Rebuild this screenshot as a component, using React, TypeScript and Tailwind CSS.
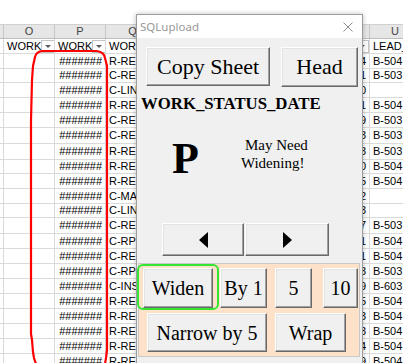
import React from "react";

type Row = { h: string; q: string; t: string; u: string };

const rows: Row[] = [
  { h: "h-[15px]", q: "R-REPAIR", t: "10254", u: "B-504" },
  { h: "h-[14px]", q: "C-REPLACE", t: "10261", u: "B-503" },
  { h: "h-[15px]", q: "C-LINE", t: "10270", u: "" },
  { h: "h-[15px]", q: "R-REPAIR", t: "10281", u: "B-504" },
  { h: "h-[15px]", q: "C-REPLACE", t: "10289", u: "B-503" },
  { h: "h-[16px]", q: "C-REPLACE", t: "10293", u: "B-503" },
  { h: "h-[16px]", q: "R-REPAIR", t: "10303", u: "B-503" },
  { h: "h-[14px]", q: "R-REPAIR", t: "10310", u: "B-504" },
  { h: "h-[15px]", q: "R-REPAIR", t: "10315", u: "B-504" },
  { h: "h-[15px]", q: "C-MAINT", t: "10322", u: "" },
  { h: "h-[14px]", q: "C-LINE", t: "10323", u: "" },
  { h: "h-[16px]", q: "C-REPLACE", t: "10327", u: "B-503" },
  { h: "h-[15px]", q: "C-RPL", t: "10331", u: "B-504" },
  { h: "h-[15px]", q: "C-REPLACE", t: "10341", u: "B-504" },
  { h: "h-[15px]", q: "C-RPL", t: "10343", u: "B-503" },
  { h: "h-[15px]", q: "C-INSTALL", t: "10349", u: "B-603" },
  { h: "h-[15px]", q: "R-REPAIR", t: "10355", u: "B-504" },
  { h: "h-[15px]", q: "R-REPAIR", t: "10363", u: "B-504" },
  { h: "h-[15px]", q: "R-REPAIR", t: "10373", u: "B-504" },
  { h: "h-[15px]", q: "R-REPAIR", t: "10384", u: "B-504" },
  { h: "h-[15px]", q: "R-REPAIR", t: "10389", u: "B-504" },
];

const cell =
  "shrink-0 box-border border-r border-b border-[#dadada] overflow-hidden whitespace-nowrap flex items-center";

function Dropdown() {
  return (
    <div className="w-[14px] h-[13px] shrink-0 box-border border border-[#c4c4c4] bg-white flex items-center justify-center">
      <svg width="6" height="3" viewBox="0 0 6 3">
        <path d="M0 0 L6 0 L3 3 Z" fill="#5a5a5a" />
      </svg>
    </div>
  );
}

const btn =
  "flex items-center justify-center shrink-0 box-border bg-[#f0f0f0] border border-t-white border-l-white border-r-[#696969] border-b-[#696969] shadow-[inset_-1px_-1px_0_#a0a0a0,inset_1px_1px_0_#e3e3e3] text-black font-['Liberation_Serif',serif] leading-none";

function Btn({ className, children }: { className: string; children?: React.ReactNode }) {
  return <div className={`${btn} ${className}`}>{children}</div>;
}

function Sheet() {
  return (
    <div className="font-['Liberation_Sans',Arial,sans-serif] text-[11px] text-black">
      <div className="h-[25px] bg-white border-b border-[#d0d0d0] box-border" />
      {/* column letters */}
      <div className="flex h-[14px] bg-[#e6e6e6] border-b border-[#bdbdbd] box-border text-[#444]">
        <div className="w-[4px] shrink-0 border-r border-[#c6c6c6]" />
        <div className="w-[51px] shrink-0 border-r border-[#c6c6c6] text-center leading-[13px]">O</div>
        <div className="w-[51px] shrink-0 border-r border-[#c6c6c6] text-center leading-[13px]">P</div>
        <div className="w-[54px] shrink-0 border-r border-[#c6c6c6] text-center leading-[13px]">Q</div>
        <div className="w-[55px] shrink-0 border-r border-[#c6c6c6] text-center leading-[13px]">R</div>
        <div className="w-[55px] shrink-0 border-r border-[#c6c6c6] text-center leading-[13px]">S</div>
        <div className="w-[100px] shrink-0 border-r border-[#c6c6c6] text-center leading-[13px]">T</div>
        <div className="w-[51px] shrink-0 border-r border-[#c6c6c6] text-center leading-[13px]">U</div>
      </div>
      {/* field names */}
      <div className="flex h-[15px]">
        <div className={`${cell} w-[4px]`} />
        <div className={`${cell} w-[51px] justify-between pl-[3px]`}>
          <span>WORK</span>
          <Dropdown />
        </div>
        <div className={`${cell} w-[51px] justify-between pl-[3px]`}>
          <span>WORK</span>
          <Dropdown />
        </div>
        <div className={`${cell} w-[54px] justify-between pl-[3px]`}>
          <span>WORK</span>
          <Dropdown />
        </div>
        <div className={`${cell} w-[55px]`} />
        <div className={`${cell} w-[55px]`} />
        <div className={`${cell} w-[100px] justify-end`}>
          <Dropdown />
        </div>
        <div className={`${cell} w-[51px] pl-[3px]`}>LEAD_ID</div>
      </div>
      {rows.map((r, i) => (
        <div key={i} className={`flex ${r.h}`}>
          <div className={`${cell} w-[4px]`} />
          <div className={`${cell} w-[51px]`} />
          <div className={`${cell} w-[51px] justify-end pr-[3px]`}>#######</div>
          <div className={`${cell} w-[54px] pl-[3px]`}>{r.q}</div>
          <div className={`${cell} w-[55px]`} />
          <div className={`${cell} w-[55px]`} />
          <div className={`${cell} w-[100px] justify-end pr-[3px]`}>{r.t}</div>
          <div className={`${cell} w-[51px] pl-[3px]`}>{r.u}</div>
        </div>
      ))}
    </div>
  );
}

function Dialog() {
  return (
    <div className="absolute left-[136px] top-[14px] w-[227px] h-[360px] box-border border border-[#9c9c9c] bg-[#f0f0f0] shadow-[0_0_5px_rgba(0,0,0,0.25)] flex flex-col z-20">
      <div className="h-[23px] shrink-0 bg-white flex items-center justify-between pl-[3px] pr-[9px]">
        <span className="font-['Noto_Sans',sans-serif] text-[11.5px] text-[#999] leading-none">SQLupload</span>
        <svg width="10" height="10" viewBox="0 0 10 10">
          <path d="M0.5 0.5 L9.5 9.5 M9.5 0.5 L0.5 9.5" stroke="#8c8c8c" strokeWidth="1" />
        </svg>
      </div>

      <div className="flex items-start gap-[11px] pl-[9px] pt-[9px]">
        <Btn className="w-[124px] h-[39px] text-[22px]">Copy Sheet</Btn>
        <Btn className="w-[77px] h-[40px] text-[22px]">Head</Btn>
      </div>

      <div className="mt-[8px] pl-[4px] font-['Liberation_Serif',serif] font-bold text-[16.75px] leading-[18px] text-black">
        WORK_STATUS_DATE
      </div>

      <div className="mt-[24px] flex items-start pl-[35px] font-['Liberation_Serif',serif] text-black">
        <div className="text-[44px] leading-[44px] font-bold">P</div>
        <div className="ml-[46px] -mt-[1px] text-[15px] leading-[18px]">
          <div>May Need</div>
          <div className="-ml-[4px]">Widening!</div>
        </div>
      </div>

      <div className="mt-[42px] flex gap-[1px] pl-[25px]">
        <Btn className="w-[82px] h-[33px]">
          <svg width="9" height="16" viewBox="0 0 9 16">
            <path d="M9 0 L9 16 L0 8 Z" fill="#000" />
          </svg>
        </Btn>
        <Btn className="w-[84px] h-[33px]">
          <svg width="9" height="16" viewBox="0 0 9 16">
            <path d="M0 0 L0 16 L9 8 Z" fill="#000" />
          </svg>
        </Btn>
      </div>

      <div className="mt-[7px] ml-[1px] w-[222px] box-border border border-[#c8c8c8] bg-[#fde1c9] pt-[4px] pl-[4px] pb-[4px]">
        <div className="flex">
          <Btn className="w-[70px] h-[40px] text-[20px]">Widen</Btn>
          <Btn className="ml-[7px] w-[47px] h-[40px] text-[20px]">By 1</Btn>
          <Btn className="ml-[8px] w-[37px] h-[40px] text-[20px]">5</Btn>
          <Btn className="ml-[11px] w-[35px] h-[40px] text-[20px]">10</Btn>
        </div>
        <div className="mt-[5px] flex">
          <Btn className="ml-[4px] w-[120px] h-[39px] text-[20px]">Narrow by 5</Btn>
          <Btn className="ml-[8px] w-[71px] h-[39px] text-[20px]">Wrap</Btn>
        </div>
      </div>
    </div>
  );
}

export default function App() {
  return (
    <div className="relative w-[403px] h-[363px] overflow-hidden bg-white">
      <Sheet />
      <svg
        className="absolute left-0 top-0 z-10 pointer-events-none"
        width="403"
        height="363"
        viewBox="0 0 403 363"
      >
        <path
          d="M97 51 L42 51 Q36 52 35 57 L33 66 L32 80 L31 120 L31 334 L32 340 L33 352 L34 358 L36 364"
          stroke="#ff0000"
          strokeWidth="2.2"
          fill="none"
          strokeLinejoin="round"
        />
        <path
          d="M97 51 Q104 52 105 58 L107 66 L107 340 L107 350 L106 358 L105 364"
          stroke="#ff0000"
          strokeWidth="2.2"
          fill="none"
          strokeLinejoin="round"
        />
      </svg>
      <Dialog />
      <div className="absolute left-[137px] top-[264px] w-[82px] h-[46px] box-border border-2 border-[#33e633] rounded-[6px] z-30" />
    </div>
  );
}
